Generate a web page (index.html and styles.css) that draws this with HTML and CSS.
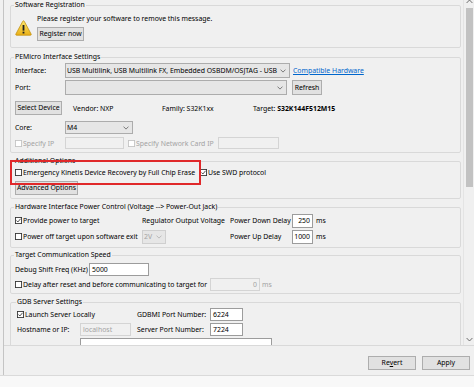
FILE: index.html
```html
<!DOCTYPE html>
<html>
<head>
<meta charset="utf-8">
<link rel="stylesheet" href="styles.css">
</head>
<body>
<div class="window">
  <div class="viewport">
    <div class="content">
      <fieldset class="grp grp-reg">
        <legend>Software Registration</legend>
        <div class="reg">
          <svg class="warn" width="17" height="16" viewBox="0 0 17 16">
            <defs>
              <linearGradient id="wg" x1="0" y1="0" x2="0" y2="1">
                <stop offset="0" stop-color="#fce76e"/>
                <stop offset="1" stop-color="#eab016"/>
              </linearGradient>
            </defs>
            <path d="M8.5 0.8 Q9 0.8 9.3 1.4 L16.2 14.2 Q16.4 15.2 15.4 15.2 H1.6 Q0.6 15.2 0.8 14.2 L7.7 1.4 Q8 0.8 8.5 0.8 Z" fill="url(#wg)" stroke="#c4900e" stroke-width="0.8"/>
            <rect x="7.6" y="5" width="1.8" height="5.6" fill="#1e1e1e"/>
            <rect x="7.6" y="11.7" width="1.8" height="1.8" fill="#1e1e1e"/>
          </svg>
          <div class="reg-body">
            <div class="reg-msg">Please register your software to remove this message.</div>
            <button class="btn btn-register">Register now</button>
          </div>
        </div>
      </fieldset>

      <fieldset class="grp grp-pe">
        <legend>PEMicro Interface Settings</legend>
        <div class="row r-iface">
          <span class="lbl w50">Interface:</span>
          <div class="sel sel-iface"><span class="sel-text">USB Multilink, USB Multilink FX, Embedded OSBDM/OSJTAG - USB</span><svg class="chev" width="6" height="4" viewBox="0 0 6 4"><path d="M0.5 0.6 L3 3.1 L5.5 0.6"/></svg></div>
          <a class="link">Compatible Hardware</a>
        </div>
        <div class="row r-port">
          <span class="lbl w50">Port:</span>
          <div class="sel sel-port"><span class="sel-text"></span><svg class="chev" width="6" height="4" viewBox="0 0 6 4"><path d="M0.5 0.6 L3 3.1 L5.5 0.6"/></svg></div>
          <button class="btn btn-refresh">Refresh</button>
        </div>
        <div class="row r-dev">
          <button class="btn btn-device">Select Device</button>
          <span class="vendor">Vendor: NXP</span>
          <span class="family">Family: S32K1xx</span>
          <span class="target">Target: <b>S32K144F512M15</b></span>
        </div>
        <div class="row r-core">
          <span class="lbl w50">Core:</span>
          <div class="sel sel-core"><span class="sel-text">M4</span><svg class="chev" width="6" height="4" viewBox="0 0 6 4"><path d="M0.5 0.6 L3 3.1 L5.5 0.6"/></svg></div>
        </div>
        <div class="row r-spec">
          <span class="chk w50 dis"><svg class="cb" viewBox="0 0 8 8"><rect x=".5" y=".5" width="7" height="7"/></svg>Specify IP</span>
          <span class="inp dis inp-ip"></span>
          <span class="chk w-netcard dis"><svg class="cb" viewBox="0 0 8 8"><rect x=".5" y=".5" width="7" height="7"/></svg>Specify Network Card IP</span>
          <span class="inp dis inp-net"></span>
        </div>
      </fieldset>

      <fieldset class="grp grp-add">
        <legend>Additional Options</legend>
        <div class="row r-emerg">
          <span class="chk w-emerg"><svg class="cb" viewBox="0 0 8 8"><rect x=".5" y=".5" width="7" height="7"/></svg>Emergency Kinetis Device Recovery by Full Chip Erase</span>
          <span class="chk"><svg class="cb" viewBox="0 0 8 8"><rect x=".5" y=".5" width="7" height="7"/><path class="tick" d="M1.7 4 L3.3 5.7 L6.4 2"/></svg>Use SWD protocol</span>
        </div>
        <div class="row r-adv">
          <button class="btn btn-adv">Advanced Options</button>
        </div>
      </fieldset>

      <fieldset class="grp grp-pwr">
        <legend>Hardware Interface Power Control (Voltage --&gt; Power-Out Jack)</legend>
        <div class="pgrid">
          <span class="chk"><svg class="cb" viewBox="0 0 8 8"><rect x=".5" y=".5" width="7" height="7"/><path class="tick" d="M1.7 4 L3.3 5.7 L6.4 2"/></svg>Provide power to target</span>
          <span>Regulator Output Voltage</span>
          <span>Power Down Delay</span>
          <span class="inp num inp-delay">250</span>
          <span class="unit">ms</span>

          <span class="chk"><svg class="cb" viewBox="0 0 8 8"><rect x=".5" y=".5" width="7" height="7"/></svg>Power off target upon software exit</span>
          <div class="sel sel-volt dis"><span class="sel-text">2V</span><svg class="chev" width="6" height="4" viewBox="0 0 6 4"><path d="M0.5 0.6 L3 3.1 L5.5 0.6"/></svg></div>
          <span>Power Up Delay</span>
          <span class="inp num inp-delay">1000</span>
          <span class="unit">ms</span>
        </div>
      </fieldset>

      <fieldset class="grp grp-speed">
        <legend>Target Communication Speed</legend>
        <div class="row r-freq">
          <span class="w-freq">Debug Shift Freq (KHz)</span>
          <span class="inp inp-freq">5000</span>
        </div>
        <div class="row r-delay">
          <span class="chk w-delay"><svg class="cb" viewBox="0 0 8 8"><rect x=".5" y=".5" width="7" height="7"/></svg>Delay after reset and before communicating to target for</span>
          <span class="inp num dis inp-wait">0</span>
          <span class="unit dis-text">ms</span>
        </div>
      </fieldset>

      <fieldset class="grp grp-gdb">
        <legend>GDB Server Settings</legend>
        <div class="ggrid">
          <span class="chk span2"><svg class="cb" viewBox="0 0 8 8"><rect x=".5" y=".5" width="7" height="7"/><path class="tick" d="M1.7 4 L3.3 5.7 L6.4 2"/></svg>Launch Server Locally</span>
          <span>GDBMI Port Number:</span>
          <span class="inp inp-port">6224</span>

          <span class="host">Hostname or IP:</span>
          <span class="inp dis inp-host">localhost</span>
          <span>Server Port Number:</span>
          <span class="inp inp-port">7224</span>

          <span></span>
          <span class="inp inp-wide"></span>
        </div>
      </fieldset>
    </div>

    <div class="scrollbar">
      <div class="sb-up"><svg width="7" height="5" viewBox="0 0 7 5"><path d="M0.6 4 L3.5 1 L6.4 4"/></svg></div>
      <div class="sb-track"><div class="sb-thumb"></div></div>
      <div class="sb-down"><svg width="7" height="5" viewBox="0 0 7 5"><path d="M0.6 1 L3.5 4 L6.4 1"/></svg></div>
    </div>
  </div>

  <div class="footer">
    <button class="btn btn-foot">Re<u>v</u>ert</button>
    <button class="btn btn-foot">Apply</button>
  </div>
</div>
<div class="status"></div>
</body>
</html>
```
FILE: styles.css
```css
* { box-sizing: border-box; }
html, body { margin: 0; padding: 0; }
body {
  width: 474px;
  height: 387px;
  overflow: hidden;
  background: #f0f0f0;
  font-family: "Noto Sans", "Noto Sans CJK SC", sans-serif;
  font-size: 6.9px;
  color: #000;
}

.window {
  margin-left: 3px;
  border-left: 1px solid #c4c4c4;
  height: 375px;
  display: flex;
  flex-direction: column;
}

.viewport {
  height: 345px;
  display: flex;
  overflow: hidden;
  flex: none;
}

.content {
  flex: 1;
  min-width: 0;
  padding: 0 2px 0 6px;
  margin-top: -1px;
}

/* group boxes */
.grp {
  margin: 2px 0 0;
  padding: 0 4px 3px;
  border: 1px solid #d9d9d9;
  border-radius: 2px;
  min-width: 0;
}
.grp legend {
  padding: 0 1px;
  margin-left: -1px;
  height: 12px;
  line-height: 12px;
  white-space: nowrap;
}
.grp-reg { margin-top: 0; padding: 2px 4px 6px; }
.grp-pe { margin-top: 3px; }
.grp-pwr { margin-top: 2px; }
.grp-speed { margin-top: 1px; padding-bottom: 2px; }
.grp-gdb { padding-left: 6px; }

.row {
  display: flex;
  align-items: center;
  white-space: nowrap;
}

/* registration */
.reg { display: flex; align-items: flex-start; }
.warn { margin-top: 7px; flex: none; }
.reg-body { margin-left: 5px; display: flex; flex-direction: column; align-items: flex-start; }
.reg-msg { height: 12px; line-height: 12px; }
.btn-register { margin-top: 2px; width: 47px; }

/* controls */
.btn {
  height: 14px;
  padding: 0;
  font: inherit;
  color: #000;
  background: #e1e1e1;
  border: 1px solid #adadad;
  line-height: 12px;
  text-align: center;
  white-space: nowrap;
  flex: none;
}

.sel {
  display: flex;
  align-items: center;
  background: #e6e6e6;
  border: 1px solid #acacac;
  padding: 0 3px 0 1px;
  flex: none;
  height: 100%;
}
.sel-text { flex: 1; overflow: hidden; white-space: nowrap; }
.chev { flex: none; }
.chev path { fill: none; stroke: #606060; stroke-width: 0.8; }
.sel.dis { background: #e6e6e6; border-color: #cfcfcf; color: #a3a3a3; }
.sel.dis .chev path { stroke: #b0b0b0; }

.inp {
  display: flex;
  align-items: center;
  height: 100%;
  background: #fff;
  border: 1px solid #9c9c9c;
  padding: 0 2px;
  flex: none;
  white-space: nowrap;
}
.inp.num { justify-content: flex-end; }
.inp.dis { background: #f0f0f0; border-color: #d4d4d4; color: #a3a3a3; }

.chk { display: inline-flex; align-items: center; white-space: nowrap; flex: none; }
.cb { width: 7px; height: 7px; margin-right: 1px; flex: none; }
.cb rect { fill: #fff; stroke: #333; stroke-width: 1; }
.cb .tick { fill: none; stroke: #222; stroke-width: 0.9; }
.chk.dis { color: #a3a3a3; }
.chk.dis .cb rect { stroke: #c3c3c3; }

.lbl { flex: none; }
.w50 { width: 50px; }

.link { color: #0066cc; text-decoration: underline; margin-left: 3px; }

/* PEMicro rows */
.r-iface { height: 15px; }
.sel-iface { width: 225px; }
.r-port { height: 15px; margin-top: 2px; }
.sel-port { width: 222px; }
.btn-refresh { width: 30px; height: 15px; margin-left: 5px; }
.r-dev { height: 14px; margin-top: 6px; }
.btn-device { width: 47px; }
.vendor { margin-left: 11px; width: 89px; }
.family { width: 91px; }
.target b { font-weight: 700; }
.r-core { height: 13px; margin-top: 6px; }
.sel-core { width: 68px; }
.r-spec { height: 12px; margin-top: 3px; }
.inp-ip { width: 59px; }
.w-netcard { width: 90px; margin-left: 4px; }
.inp-net { width: 61px; }

/* additional options */
.r-emerg { height: 12px; margin-top: -1px; position: relative; }
.r-emerg::before {
  content: "";
  position: absolute;
  left: -5px;
  top: -6px;
  width: 187px;
  height: 21px;
  border: 2px solid #e0282a;
  pointer-events: none;
}
.w-emerg { width: 185px; }
.r-adv { height: 14px; margin-top: 3px; }
.btn-adv { width: 63px; }

/* power */
.pgrid {
  display: grid;
  grid-template-columns: 127px 88px 62px 21px auto;
  grid-template-rows: 15px 15px;
  row-gap: 1px;
  align-items: center;
  white-space: nowrap;
}
.inp-delay { width: 21px; height: 14px; }
.sel-volt { width: 24px; height: 14px; }
.unit { margin-left: 3px; }

/* speed */
.r-freq { height: 13px; margin-top: 2px; }
.w-freq { width: 74px; flex: none; }
.inp-freq { width: 60px; }
.r-delay { height: 14px; margin-top: 1px; }
.w-delay { width: 195px; }
.inp-wait { width: 50px; height: 13px; }
.dis-text { color: #a3a3a3; margin-left: 2px; }

/* gdb */
.ggrid {
  display: grid;
  grid-template-columns: 63px 57px 73px 33px;
  grid-template-rows: 13px 13px 13px;
  row-gap: 2px;
  align-items: center;
  white-space: nowrap;
}
.ggrid .span2 { grid-column: span 2; }
.inp-port { width: 33px; }
.inp-host { width: 51px; }
.inp-wide { width: 192px; grid-column: 2 / span 3; }

/* scrollbar */
.scrollbar {
  width: 11px;
  flex: none;
  display: flex;
  flex-direction: column;
  background: #f0f0f0;
  border-left: 1px solid #e4e4e4;
}
.sb-up { height: 8px; display: flex; justify-content: center; align-items: flex-start; }
.sb-up svg { margin-top: -1px; }
.sb-track { flex: 1; }
.sb-thumb { margin: 0 1px 0 2px; height: 179px; background: #c2c2c2; }
.sb-down { height: 12px; display: flex; justify-content: center; align-items: center; }
.sb-up path, .sb-down path { fill: none; stroke: #606060; stroke-width: 0.9; }

/* footer */
.footer {
  height: 30px;
  border-top: 1px solid #d9d9d9;
  display: flex;
  justify-content: flex-end;
  align-items: flex-start;
  gap: 6px;
  padding: 10px 4px 0 0;
}
.btn-foot { width: 48px; }
.btn-foot u { text-decoration-thickness: 0.5px; }

.status {
  height: 12px;
  background: #f8f8f8;
  border-top: 1px solid #dadada;
}
```
